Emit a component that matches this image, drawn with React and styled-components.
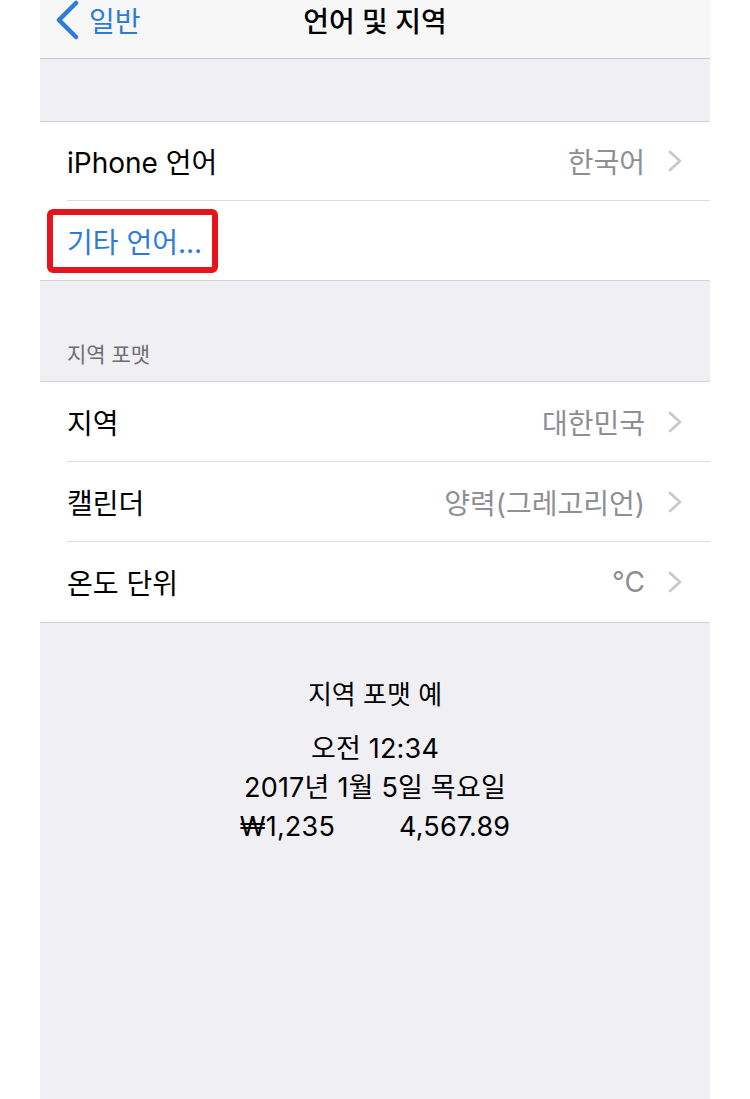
import styled, { createGlobalStyle } from "styled-components";


const GlobalStyle = createGlobalStyle`
	html, body {
		margin: 0;
		padding: 0;
		background: #ffffff;
	}

	body {
		font-family: "Inter", "Noto Sans CJK KR", sans-serif;
		-webkit-font-smoothing: antialiased;
	}
`;

const Page = styled.div`
	width: 100%;
	height: 1099px;
	overflow: hidden;

	display: flex;
	justify-content: center;
`;

const Screen = styled.div`
	width: 670px;
	min-height: 1099px;

	background-color: #efeff4;

	display: flex;
	flex-direction: column;
`;

const NavBar = styled.div`
	height: 59px;
	box-sizing: border-box;
	padding: 0 13px;

	background-color: #f7f7f8;
	border-bottom: 1px solid #c8c7cc;

	display: grid;
	grid-template-columns: 1fr auto 1fr;
	align-items: start;
`;

const BackButton = styled.div`
	height: 40px;

	display: flex;
	align-items: center;
	gap: 8px;

	color: #2c7bd9;
	font-size: 28px;
`;

const NavTitle = styled.div`
	height: 40px;

	display: flex;
	align-items: center;

	color: #000000;
	font-size: 28px;
	font-weight: 500;
`;

const Section = styled.div`
	background-color: #ffffff;
	border-top: 1px solid #d1d1d6;
	border-bottom: 1px solid #d1d1d6;
`;

const SectionGap = styled.div`
	height: ${ (props) => props.height }px;
`;

const SectionHeader = styled.div`
	height: 100px;
	box-sizing: border-box;
	padding: 0 27px 13px;

	display: flex;
	align-items: flex-end;

	color: #6d6d72;
	font-size: 21px;
`;

const Row = styled.div`
	position: relative;
	height: ${ (props) => props.tall ? 80 : 79 }px;
	padding-left: 27px;

	display: flex;
	align-items: stretch;
`;

const RowInner = styled.div`
	flex: 1;
	padding-right: 27px;

	display: flex;
	align-items: center;
	justify-content: space-between;

	border-bottom: ${ (props) => props.last ? "none" : "1px solid #dcdce0" };
`;

const RowLabel = styled.span`
	color: ${ (props) => props.link ? "#2c7bd9" : "#000000" };
	font-size: 28px;
`;

const RowValue = styled.span`
	display: flex;
	align-items: center;
	gap: 22px;

	color: #8e8e93;
	font-size: 28px;
`;

const Highlight = styled.div`
	position: absolute;
	left: 7px;
	top: 8px;
	width: 171px;
	height: 64px;
	box-sizing: border-box;

	border: 6px solid #e5141d;
	border-radius: 6px;
	pointer-events: none;
`;

const Footer = styled.div`
	padding-top: 55px;

	display: flex;
	flex-direction: column;
	align-items: center;
`;

const FooterTitle = styled.div`
	line-height: 34px;

	color: #000000;
	font-size: 26px;
`;

const ExampleLines = styled.div`
	margin-top: 17px;

	display: flex;
	flex-direction: column;
	align-items: center;
`;

const ExampleLine = styled.div`
	display: flex;
	gap: ${ (props) => props.gap || 0 }px;

	line-height: 39px;
	color: #000000;
	font-size: 27px;
	letter-spacing: 0.2px;
`;


function BackChevron() {
	return (
		<svg width="28" height="40" viewBox="0 0 28 40">
			<path d="M23 3 L6 20 L23 37" fill="none" stroke="#2c7bd9" strokeWidth="4.5" strokeLinecap="round" strokeLinejoin="round"/>
		</svg>);
}

function Disclosure() {
	return (
		<svg width="16" height="22" viewBox="0 0 16 22">
			<path d="M3 2 L13 11 L3 20" fill="none" stroke="#c7c7cc" strokeWidth="2.6" strokeLinecap="round" strokeLinejoin="round"/>
		</svg>);
}

function SettingRow({ label, value, link, last, tall, children }) {
	return (
		<Row tall={ tall }>
			<RowInner last={ last }>
				<RowLabel link={ link }>{ label }</RowLabel>
				{
					(value !== undefined) &&
						<RowValue>
							{ value }
							<Disclosure/>
						</RowValue>
				}
			</RowInner>
			{ children }
		</Row>);
}


const regionRows = [
	{ label: "지역", value: "대한민국" },
	{ label: "캘린더", value: "양력(그레고리언)" },
	{ label: "온도 단위", value: "°C" },
];


export default function App() {
	return (
		<Page>
			<GlobalStyle/>
			<Screen>
				<NavBar>
					<BackButton>
						<BackChevron/>
						<span>일반</span>
					</BackButton>
					<NavTitle>언어 및 지역</NavTitle>
					<div/>
				</NavBar>

				<SectionGap height={ 62 }/>

				<Section>
					<SettingRow label="iPhone 언어" value="한국어"/>
					<SettingRow label="기타 언어..." link last>
						<Highlight/>
					</SettingRow>
				</Section>

				<SectionHeader>지역 포맷</SectionHeader>

				<Section>
					{
						regionRows.map((row, index) => {
								return (
									<SettingRow
										key={ row.label }
										label={ row.label }
										value={ row.value }
										tall
										last={ index === regionRows.length - 1 }/>);
							})
					}
				</Section>

				<Footer>
					<FooterTitle>지역 포맷 예</FooterTitle>
					<ExampleLines>
						<ExampleLine>오전 12:34</ExampleLine>
						<ExampleLine>2017년 1월 5일 목요일</ExampleLine>
						<ExampleLine gap={ 64 }>
							<span>₩1,235</span>
							<span>4,567.89</span>
						</ExampleLine>
					</ExampleLines>
				</Footer>
			</Screen>
		</Page>);
}
